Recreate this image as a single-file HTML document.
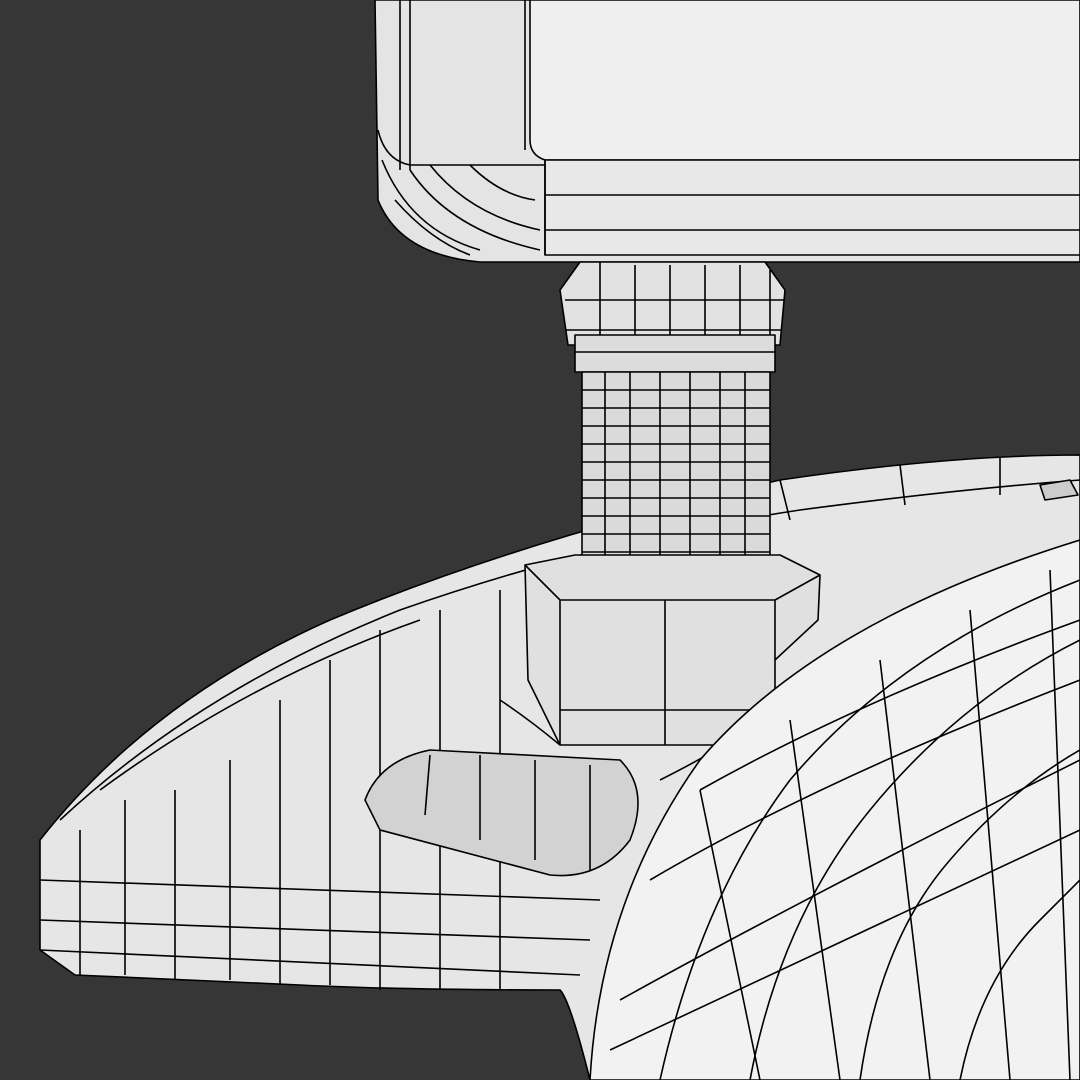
<!DOCTYPE html>
<html><head><style>html,body{margin:0;padding:0;background:#363636;}svg{display:block}</style></head>
<body>
<svg width="1080" height="1080" viewBox="0 0 1080 1080" xmlns="http://www.w3.org/2000/svg">
<rect width="1080" height="1080" fill="#363636"/>
<g stroke="#000" stroke-width="1.6" stroke-linejoin="round">
<!-- base plate -->
<path d="M40 840 Q150 700 330 620 Q520 540 780 480 Q950 455 1080 455 V1080 H590 Q570 1000 560 990 Q400 990 300 985 L75 975 L40 950 Z" fill="#e6e6e6"/>
<g fill="none">
<path d="M40 880 L600 900 M40 920 L590 940 M40 950 L580 975"/>
<path d="M80 830 V975 M125 800 V975 M175 790 V980 M230 760 V980 M280 700 V985 M330 660 V985 M380 630 V990 M440 610 V990 M500 590 V990"/>
<path d="M60 820 Q200 690 400 610 Q600 540 800 510 Q950 490 1080 480"/>
<path d="M100 790 Q250 680 420 620"/>
<path d="M780 480 L790 520 M900 465 L905 505 M1000 458 V495"/>
</g>
<!-- top box -->
<path d="M375 0 H1080 V262 H480 Q400 255 378 200 Z" fill="#e4e4e4"/>
<path d="M530 0 H1080 V160 H545 Q530 155 530 140 Z" fill="#efefef"/>
<path d="M545 160 H1080 V255 H545 Z" fill="#e8e8e8"/>
<path d="M545 160 L545 255 M545 195 H1080 M545 230 H1080" fill="none"/>
<path d="M378 130 Q385 160 410 165 L545 165 M382 160 Q410 230 480 250 M395 200 Q430 240 470 255 M410 170 Q450 230 540 250 M430 165 Q470 215 540 230 M470 165 Q500 195 535 200" fill="none"/>
<path d="M400 0 V170 M410 0 V170 M525 0 V150" fill="none"/>
<!-- neck -->
<path d="M580 262 H765 L785 290 L780 345 H568 L560 290 Z" fill="#e2e2e2"/>
<path d="M565 300 H785 M565 330 H782 M600 262 V345 M635 265 V345 M670 265 V345 M705 265 V345 M740 265 V345 M770 270 V345" fill="none"/>
<path d="M575 335 H775 V372 H575 Z" fill="#dcdcdc"/>
<path d="M575 352 H775" fill="none"/>
<!-- threads -->
<path d="M582 372 H770 V572 H582 Z" fill="#dadada"/>
<g fill="none">
<path d="M582 390 H770 M582 408 H770 M582 426 H770 M582 444 H770 M582 462 H770 M582 480 H770 M582 498 H770 M582 516 H770 M582 534 H770 M582 552 H770"/>
<path d="M605 372 V572 M630 372 V572 M660 372 V572 M690 372 V572 M720 372 V572 M745 372 V572"/>
</g>
<!-- hole -->
<path d="M365 800 Q380 760 430 750 L620 760 Q650 790 630 840 Q600 880 550 875 L380 830 Z" fill="#d2d2d2"/>
<path d="M430 755 L425 815 M480 755 V840 M535 760 V860 M590 765 V870" fill="none"/>
<!-- hex nut -->
<path d="M525 565 L575 555 H780 L820 575 L818 620 L775 660 V745 H560 L528 680 Z" fill="#e0e0e0"/>
<path d="M525 565 L560 600 H775 L820 575 M560 600 V745 M665 600 V745 M775 600 V660 M560 710 H775" fill="none"/>
<path d="M500 700 Q530 720 560 745 M775 700 Q760 730 660 780" fill="none"/>
<!-- dome -->
<path d="M590 1080 Q600 900 700 760 Q820 620 1080 540 V1080 Z" fill="#f2f2f2"/>
<g fill="none">
<path d="M620 1000 Q800 900 1080 760 M610 1050 Q800 960 1080 830 M650 880 Q820 780 1080 680 M700 790 Q860 700 1080 620"/>
<path d="M660 1080 Q700 900 790 780 Q900 650 1080 580 M750 1080 Q780 920 870 810 Q960 700 1080 640 M860 1080 Q880 940 950 860 Q1010 790 1080 750 M960 1080 Q980 980 1040 920 L1080 880"/>
<path d="M700 790 L760 1080 M790 720 L840 1080 M880 660 L930 1080 M970 610 L1010 1080 M1050 570 L1070 1080"/>
</g>
<path d="M1040 485 L1070 480 L1078 495 L1045 500 Z" fill="#ccc"/>
</g>
</svg>
</body></html>
